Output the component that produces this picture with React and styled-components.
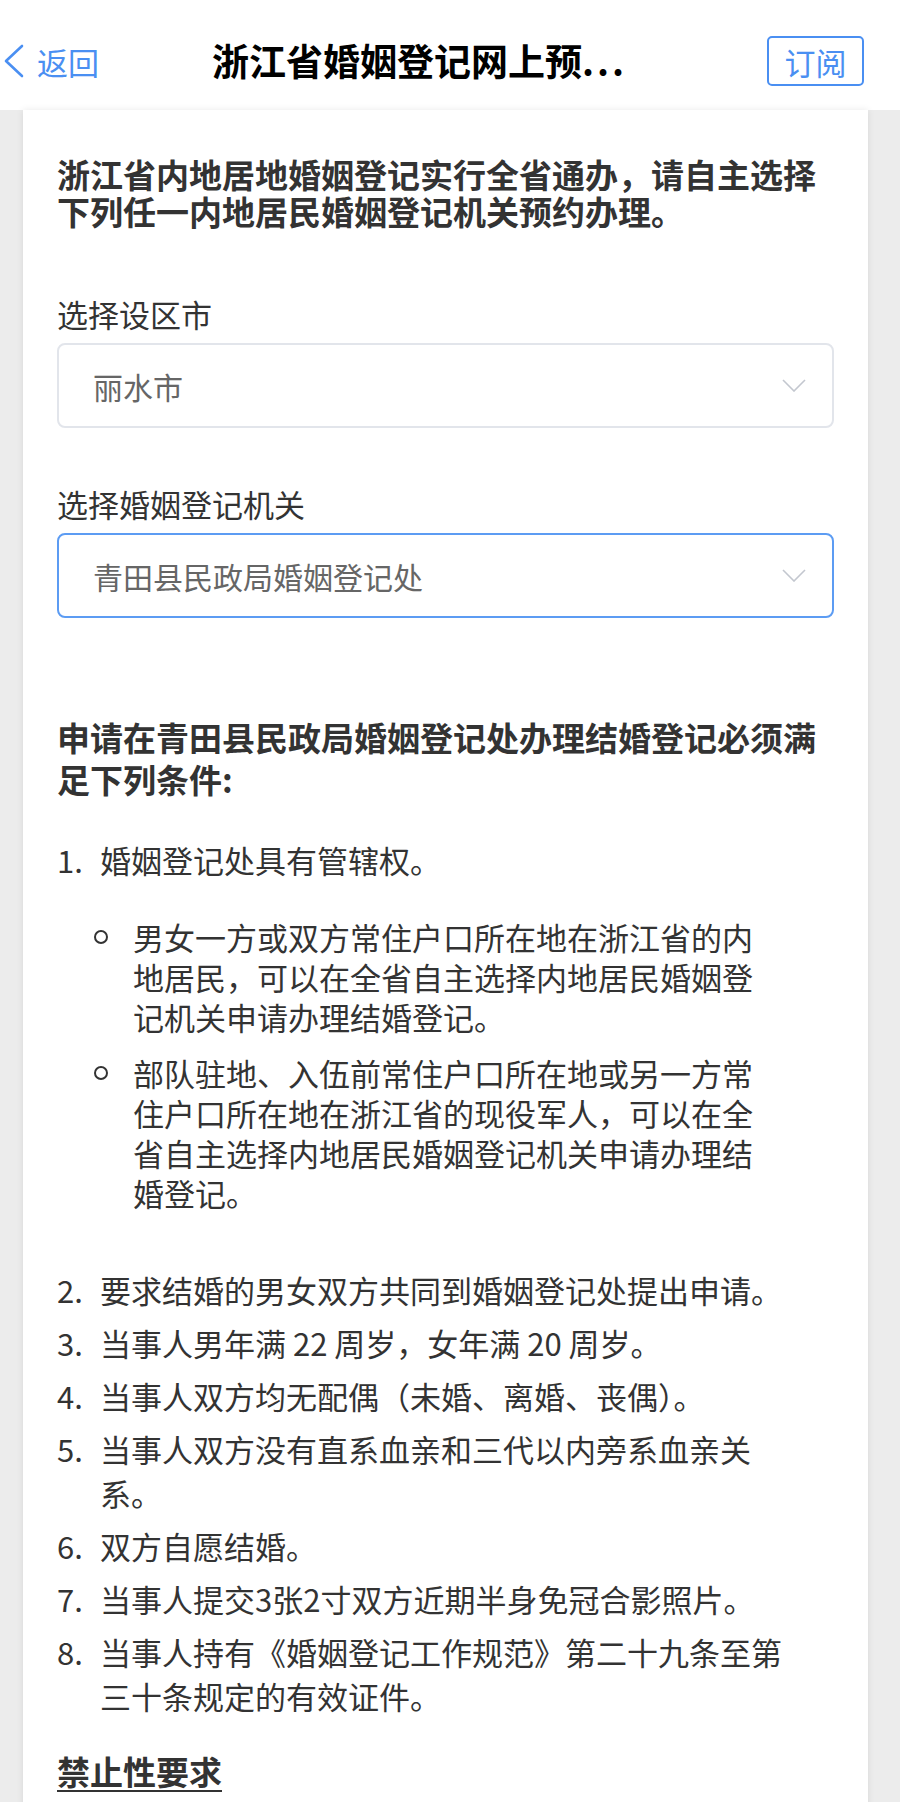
import React from 'react';
import styled, { createGlobalStyle } from 'styled-components';

const GlobalStyle = createGlobalStyle`
  html, body {
    margin: 0;
    padding: 0;
    background: #ececec;
  }
  body {
    font-family: "Noto Sans CJK SC", "Noto Sans", sans-serif;
    color: #333;
  }
  * { box-sizing: border-box; }
`;

const BLUE = '#4a8ff2';
const FONT = '"Noto Sans CJK SC", "Noto Sans", sans-serif';

const Page = styled.div`
  width: 900px;
  min-height: 1802px;
  background: #ececec;
  display: flex;
  flex-direction: column;
`;

const NavBar = styled.header`
  height: 110px;
  background: #fff;
  display: flex;
  align-items: center;
  padding: 12px 36px 0 2px;
`;

const BackButton = styled.button`
  display: flex;
  align-items: center;
  gap: 12px;
  width: 210px;
  height: 50px;
  padding: 0;
  border: 0;
  background: none;
  color: ${BLUE};
  font: 400 31px/1 ${FONT};
  cursor: pointer;
`;

const Title = styled.h1`
  flex: 1;
  margin: 0;
  font: 700 37px/1.4 ${FONT};
  color: #000;
  white-space: nowrap;
`;

const Dots = styled.span`
  letter-spacing: 3px;
`;

const SubscribeButton = styled.button`
  width: 97px;
  height: 50px;
  border: 2px solid ${BLUE};
  border-radius: 5px;
  background: #fff;
  color: ${BLUE};
  font: 400 31px/1 ${FONT};
  padding: 0;
  cursor: pointer;
`;

const Content = styled.main`
  flex: 1;
  display: flex;
  padding: 0 32px 0 23px;
`;

const Card = styled.section`
  flex: 1;
  background: #fff;
  box-shadow: 0 0 7px rgba(0, 0, 0, 0.09);
  padding: 46px 34px 40px;
`;

const Lead = styled.p`
  margin: 0;
  font: 700 33px/37px ${FONT};
  color: #333;
`;

const Field = styled.div`
  margin-top: ${(p) => p.$gap}px;
`;

const FieldLabel = styled.div`
  font: 400 31px/40px ${FONT};
  color: #333;
  margin-bottom: 9px;
`;

const SelectBox = styled.div`
  height: 85px;
  border: 2px solid ${(p) => (p.$active ? '#5c9cf3' : '#e2e5eb')};
  border-radius: 8px;
  display: flex;
  align-items: center;
  justify-content: space-between;
  padding: 0 26px 0 34px;
  font: 400 30px/1 ${FONT};
  color: #666;
  background: #fff;
`;

const SectionTitle = styled.h2`
  margin: 98px 0 0;
  font: 700 33px/42px ${FONT};
  color: #333;
`;

const OrderedList = styled.ol`
  list-style: none;
  margin: 38px 0 0;
  padding: 0 44px 0 0;
`;

const Item = styled.li`
  display: grid;
  grid-template-columns: 43px 1fr;
  font: 400 31px/44px ${FONT};
  color: #333;
  & + & {
    margin-top: 9px;
  }
`;

const ItemNumber = styled.span``;

const ItemBody = styled.div``;

const SubList = styled.ul`
  list-style: none;
  margin: 35px 20px 46px -8px;
  padding: 0;
`;

const SubItem = styled.li`
  display: grid;
  grid-template-columns: 41px 1fr;
  align-items: start;
  line-height: 40px;
  & + & {
    margin-top: 16px;
  }
`;

const Circle = styled.span`
  display: block;
  width: 14px;
  height: 14px;
  margin: 13px 0 0 2px;
  border: 2px solid #333;
  border-radius: 50%;
`;

const Prohibit = styled.h3`
  margin: 32px 0 0;
  font: 700 33px/42px ${FONT};
  color: #333;
  text-decoration: underline;
  text-decoration-thickness: 2px;
  text-underline-offset: 5px;
`;

const Chevron = () => (
  <svg width="23" height="34" viewBox="0 0 23 34" fill="none">
    <polyline points="20,2 4,17 20,32" stroke={BLUE} strokeWidth="2.6" strokeLinecap="round" strokeLinejoin="round" />
  </svg>
);

const DownArrow = () => (
  <svg width="24" height="13" viewBox="0 0 24 13" fill="none">
    <polyline points="1,1 12,12 23,1" stroke="#c3c7cf" strokeWidth="1.6" />
  </svg>
);

const subItems = [
  '男女一方或双方常住户口所在地在浙江省的内地居民，可以在全省自主选择内地居民婚姻登记机关申请办理结婚登记。',
  '部队驻地、入伍前常住户口所在地或另一方常住户口所在地在浙江省的现役军人，可以在全省自主选择内地居民婚姻登记机关申请办理结婚登记。',
];

const items = [
  '要求结婚的男女双方共同到婚姻登记处提出申请。',
  '当事人男年满 22 周岁，女年满 20 周岁。',
  '当事人双方均无配偶（未婚、离婚、丧偶）。',
  '当事人双方没有直系血亲和三代以内旁系血亲关系。',
  '双方自愿结婚。',
  '当事人提交3张2寸双方近期半身免冠合影照片。',
  '当事人持有《婚姻登记工作规范》第二十九条至第三十条规定的有效证件。',
];

export default function App() {
  return (
    <>
      <GlobalStyle />
      <Page>
        <NavBar>
          <BackButton>
            <Chevron />
            返回
          </BackButton>
          <Title>
            浙江省婚姻登记网上预<Dots>...</Dots>
          </Title>
          <SubscribeButton>订阅</SubscribeButton>
        </NavBar>
        <Content>
          <Card>
            <Lead>浙江省内地居地婚姻登记实行全省通办，请自主选择下列任一内地居民婚姻登记机关预约办理。</Lead>
            <Field $gap={64}>
              <FieldLabel>选择设区市</FieldLabel>
              <SelectBox>
                <span>丽水市</span>
                <DownArrow />
              </SelectBox>
            </Field>
            <Field $gap={56}>
              <FieldLabel>选择婚姻登记机关</FieldLabel>
              <SelectBox $active>
                <span>青田县民政局婚姻登记处</span>
                <DownArrow />
              </SelectBox>
            </Field>
            <SectionTitle>申请在青田县民政局婚姻登记处办理结婚登记必须满足下列条件:</SectionTitle>
            <OrderedList>
              <Item>
                <ItemNumber>1.</ItemNumber>
                <ItemBody>
                  婚姻登记处具有管辖权。
                  <SubList>
                    {subItems.map((t) => (
                      <SubItem key={t}>
                        <Circle />
                        <span>{t}</span>
                      </SubItem>
                    ))}
                  </SubList>
                </ItemBody>
              </Item>
              {items.map((t, i) => (
                <Item key={t}>
                  <ItemNumber>{i + 2}.</ItemNumber>
                  <ItemBody>{t}</ItemBody>
                </Item>
              ))}
            </OrderedList>
            <Prohibit>禁止性要求</Prohibit>
          </Card>
        </Content>
      </Page>
    </>
  );
}
